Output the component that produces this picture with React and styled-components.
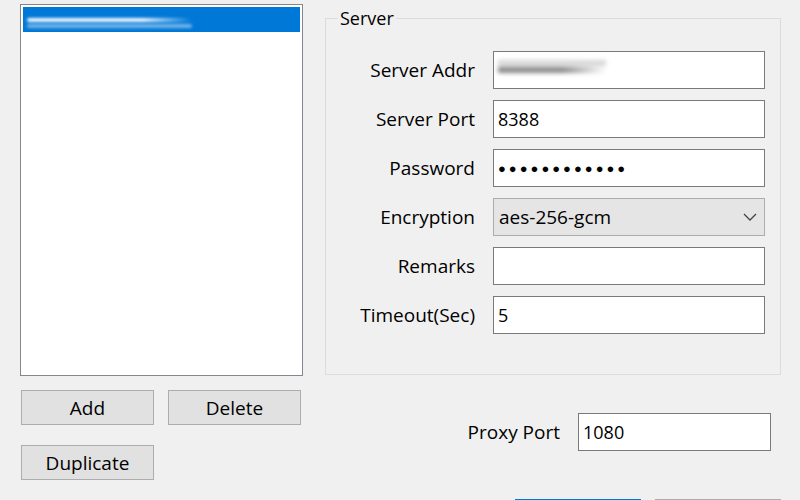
import React from 'react';
import styled, { createGlobalStyle } from 'styled-components';

const GlobalStyle = createGlobalStyle`
  html, body {
    margin: 0;
    padding: 0;
    background: #f0f0f0;
  }
  body {
    font-family: 'Open Sans', 'Noto Sans', sans-serif;
    color: #000;
  }
`;

const fields = [
  { label: 'Server Addr', value: '', blurred: true },
  { label: 'Server Port', value: '8388' },
  { label: 'Password', value: '●●●●●●●●●●●●', dots: true },
  { label: 'Encryption', value: 'aes-256-gcm', combo: true },
  { label: 'Remarks', value: '' },
  { label: 'Timeout(Sec)', value: '5' },
];

const App = () => {
  return (
    <>
      <GlobalStyle />
      <Window>
        <LeftColumn>
          <ListBox>
            <ListItem selected>
              <BlurLine />
            </ListItem>
          </ListBox>
          <ButtonRow>
            <Button>Add</Button>
            <Button>Delete</Button>
          </ButtonRow>
          <ButtonRow>
            <Button>Duplicate</Button>
          </ButtonRow>
          <ButtonRow>
            <Button>Import</Button>
            <Button>Export</Button>
          </ButtonRow>
        </LeftColumn>

        <RightColumn>
          <GroupBox>
            <Legend>Server</Legend>
            <FormGrid>
              {fields.map((f) => (
                <React.Fragment key={f.label}>
                  <Label>{f.label}</Label>
                  {f.combo ? (
                    <Combo>
                      <span>{f.value}</span>
                      <svg width='14' height='8' viewBox='0 0 14 8'>
                        <polyline
                          points='1,1 7,7 13,1'
                          fill='none'
                          stroke='#444'
                          strokeWidth='1.3'
                        />
                      </svg>
                    </Combo>
                  ) : (
                    <TextBox dots={f.dots}>
                      {f.blurred ? <AddrBlur /> : f.value}
                    </TextBox>
                  )}
                </React.Fragment>
              ))}
            </FormGrid>
          </GroupBox>

          <ProxyRow>
            <Label>Proxy Port</Label>
            <TextBox width='193px'>1080</TextBox>
          </ProxyRow>

          <BottomRow>
            <Button width='126px' primary>
              OK
            </Button>
            <Button width='126px'>Cancel</Button>
          </BottomRow>
        </RightColumn>
      </Window>
    </>
  );
};

const Window = styled.div`
  width: 800px;
  height: 500px;
  overflow: hidden;
  display: flex;
  align-items: flex-start;
  box-sizing: border-box;
  padding: 4px 0 0 20px;
  gap: 22px;
`;

const LeftColumn = styled.div`
  width: 283px;
  flex-shrink: 0;
  display: flex;
  flex-direction: column;
`;

const ListBox = styled.div`
  height: 372px;
  flex-shrink: 0;
  box-sizing: border-box;
  background: #fff;
  border: 1px solid #828790;
  padding: 2px;
`;

const ListItem = styled.div`
  height: 25px;
  background: ${(props) => (props.selected ? '#0078d7' : 'transparent')};
  display: flex;
  align-items: center;
  padding-left: 4px;
`;

const BlurLine = styled.div`
  width: 165px;
  height: 4px;
  border-radius: 2px;
  background: linear-gradient(to right, #f0f7ff 70%, rgba(255, 255, 255, 0));
  filter: blur(1.5px);
  box-shadow: 0 6px 0 rgba(255, 255, 255, 0.45);
`;

const ButtonRow = styled.div`
  display: flex;
  flex-shrink: 0;
  gap: 14px;
  margin-top: 14px;
  padding-left: 1px;

  & + & {
    margin-top: 20px;
  }
`;

const Button = styled.div`
  width: ${(props) => props.width || '133px'};
  height: 35px;
  box-sizing: border-box;
  background: #e1e1e1;
  border: ${(props) => (props.primary ? '2px solid #0078d7' : '1px solid #adadad')};
  display: flex;
  align-items: center;
  justify-content: center;
  font-size: 19px;
  flex-shrink: 0;
`;

const RightColumn = styled.div`
  width: 456px;
  flex-shrink: 0;
  display: flex;
  flex-direction: column;
`;

const GroupBox = styled.fieldset`
  margin: 3px 0 0 0;
  height: 368px;
  flex-shrink: 0;
  box-sizing: border-box;
  border: 1px solid #dcdcdc;
  padding: 22px 15px 0 0;
`;

const Legend = styled.legend`
  font-size: 18px;
  padding: 0 2px;
  margin-left: 12px;
  line-height: 22px;
`;

const FormGrid = styled.div`
  display: grid;
  grid-template-columns: 1fr 272px;
  column-gap: 18px;
  row-gap: 11px;
  align-items: center;
`;

const Label = styled.div`
  font-size: 19px;
  text-align: right;
  white-space: nowrap;
`;

const TextBox = styled.div`
  width: ${(props) => props.width || 'auto'};
  height: 38px;
  flex-shrink: 0;
  box-sizing: border-box;
  background: #fff;
  border: 1px solid #7a7a7a;
  display: flex;
  align-items: center;
  padding-left: 4px;
  font-size: ${(props) => (props.dots ? '13px' : '18px')};
  letter-spacing: ${(props) => (props.dots ? '3px' : '0')};
`;

const AddrBlur = styled.div`
  width: 108px;
  height: 6px;
  background: linear-gradient(to right, #8a8a8a 60%, rgba(200, 200, 200, 0));
  filter: blur(2px);
  box-shadow: 0 -7px 0 rgba(190, 190, 190, 0.6);
`;

const Combo = styled.div`
  height: 38px;
  box-sizing: border-box;
  background: #e5e5e5;
  border: 1px solid #adadad;
  display: flex;
  align-items: center;
  justify-content: space-between;
  padding: 0 7px 0 5px;
  font-size: 19px;
`;

const ProxyRow = styled.div`
  display: flex;
  flex-shrink: 0;
  align-items: center;
  justify-content: flex-end;
  gap: 18px;
  padding-right: 10px;
  margin-top: 38px;
`;

const BottomRow = styled.div`
  display: flex;
  flex-shrink: 0;
  justify-content: flex-end;
  gap: 14px;
  margin-top: 48px;
`;

export default App;
